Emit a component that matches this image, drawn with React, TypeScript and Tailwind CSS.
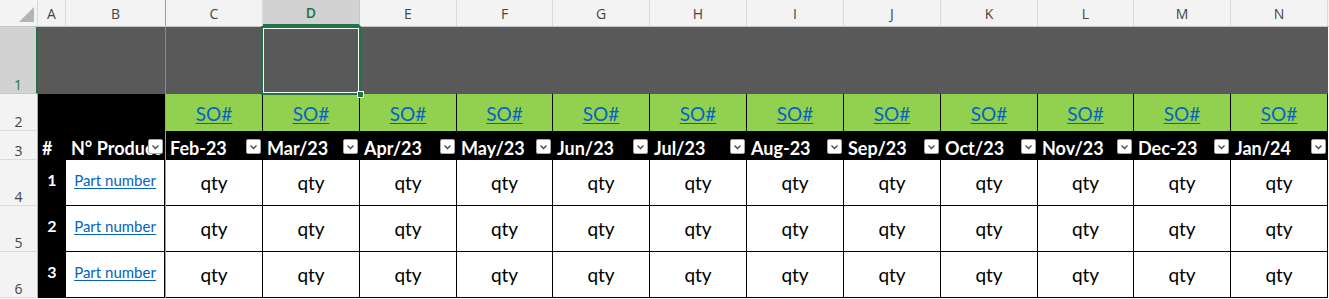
const months = [
  { letter: "C", w: "w-[97px]", label: "Feb-23" },
  { letter: "D", w: "w-[97px]", label: "Mar/23" },
  { letter: "E", w: "w-[97px]", label: "Apr/23" },
  { letter: "F", w: "w-[96px]", label: "May/23" },
  { letter: "G", w: "w-[97px]", label: "Jun/23" },
  { letter: "H", w: "w-[97px]", label: "Jul/23" },
  { letter: "I", w: "w-[97px]", label: "Aug-23" },
  { letter: "J", w: "w-[97px]", label: "Sep/23" },
  { letter: "K", w: "w-[97px]", label: "Oct/23" },
  { letter: "L", w: "w-[96px]", label: "Nov/23" },
  { letter: "M", w: "w-[97px]", label: "Dec-23" },
  { letter: "N", w: "w-[97px]", label: "Jan/24" },
];

const calibri = "font-['Lato','Liberation_Sans',sans-serif]";

// the little excel autofilter button
const FilterButton = () => (
  <div className="absolute right-[2px] bottom-[6px] w-[15px] h-[15px] bg-white border border-[#a6a6a6] rounded-[2px] flex items-center justify-center">
    <svg width="9" height="6" viewBox="0 0 9 6">
      <path d="M1.5 1.5 L4.5 4.5 L7.5 1.5" fill="none" stroke="#444" strokeWidth="1.3" />
    </svg>
  </div>
);

const RowHead = ({ n, h, active }: { n: number; h: string; active?: boolean }) => (
  <div
    className={`${h} w-[38px] shrink-0 flex items-end justify-center pb-[1px] text-[14px] leading-none font-['Open_Sans',sans-serif] border-b ${
      active
        ? "bg-[#d2d2d2] text-[#217346] border-r-2 border-r-[#217346] border-b-[#c8c8c8]"
        : "bg-[#f3f3f3] text-[#444] border-r border-r-[#ababab] border-b-[#dadada]"
    }`}
  >
    {n}
  </div>
);

const Freeze = () => <div className="w-px shrink-0 self-stretch bg-[#9b9b9b]" />;

export default function App() {
  return (
    <div className={`w-[1329px] h-[299px] bg-white overflow-hidden ${calibri}`}>
      {/* column letters */}
      <div className="flex h-[27px] bg-[#f3f3f3] border-b border-[#c6c6c6] font-['Open_Sans',sans-serif] text-[14px] text-[#444]">
        <div className="w-[38px] shrink-0 relative border-r border-[#dadada]">
          <svg className="absolute right-[3px] bottom-[4px]" width="15" height="15" viewBox="0 0 15 15">
            <path d="M15 0 L15 15 L0 15 Z" fill="#b4b4b4" />
          </svg>
        </div>
        <div className="w-[28px] shrink-0 flex items-center justify-center border-r border-[#dadada]">A</div>
        <div className="w-[99px] shrink-0 flex items-center justify-center">B</div>
        <Freeze />
        {months.map((m) => (
          <div
            key={m.letter}
            className={`${m.w} shrink-0 flex items-center justify-center border-r ${
              m.letter === "D"
                ? "bg-[#d2d2d2] text-[#217346] font-semibold border-b-2 border-b-[#217346] border-r-[#c8c8c8]"
                : "border-[#dadada]"
            }`}
          >
            {m.letter}
          </div>
        ))}
      </div>

      {/* row 1: dark band */}
      <div className="flex h-[67px]">
        <RowHead n={1} h="h-[67px]" active />
        <div className="w-[127px] shrink-0 bg-[#595959]" />
        <div className="w-px shrink-0 bg-[#8c8c8c]" />
        {months.map((m) => (
          <div key={m.letter} className={`${m.w} shrink-0 bg-[#595959] relative`}>
            {m.letter === "D" && (
              <div className="absolute -left-[2px] -top-[1px] -right-[1px] -bottom-[1px] border-2 border-[#217346] z-10">
                <div className="w-full h-full border border-white" />
                <div className="absolute -right-[5px] -bottom-[5px] w-[7px] h-[7px] bg-[#217346] border border-white" />
              </div>
            )}
          </div>
        ))}
      </div>

      {/* row 2: SO# links */}
      <div className="flex h-[37px]">
        <RowHead n={2} h="h-[37px]" />
        <div className="w-[127px] shrink-0 bg-black" />
        <Freeze />
        {months.map((m) => (
          <div
            key={m.letter}
            className={`${m.w} shrink-0 bg-[#92d050] border-r border-black flex items-center justify-center pt-[3px] text-[19px] text-[#0563c1] underline underline-offset-2`}
          >
            SO#
          </div>
        ))}
      </div>

      {/* row 3: month headers with filters */}
      <div className="flex h-[29px]">
        <RowHead n={3} h="h-[29px]" />
        <div className="w-[28px] shrink-0 bg-black text-white font-bold text-[18px] flex items-end pl-[4px] pb-[3px] leading-none">
          #
        </div>
        <div className="w-[99px] shrink-0 bg-black text-white font-bold text-[18px] relative overflow-hidden whitespace-nowrap flex items-end pl-[5px] pb-[3px] leading-none">
          N° Product
          <FilterButton />
        </div>
        <Freeze />
        {months.map((m) => (
          <div
            key={m.letter}
            className={`${m.w} shrink-0 bg-black text-white font-bold text-[18px] relative flex items-end pl-[4px] pb-[3px] leading-none whitespace-nowrap`}
          >
            {m.label}
            <FilterButton />
          </div>
        ))}
      </div>

      {/* data rows */}
      {[1, 2, 3].map((n) => (
        <div key={n} className="flex h-[46px]">
          <RowHead n={n + 3} h="h-[46px]" />
          <div className="w-[28px] shrink-0 bg-black text-white font-bold text-[16px] flex items-center justify-center pb-[7px]">
            {n}
          </div>
          <div className="w-[99px] shrink-0 border-r border-b border-black flex items-center justify-center pb-[5px] text-[15px] text-[#0563c1] underline underline-offset-2 whitespace-nowrap">
            Part number
          </div>
          <Freeze />
          {months.map((m) => (
            <div
              key={m.letter}
              className={`${m.w} shrink-0 border-r border-b border-black flex items-center justify-center pt-[1px] text-[19px] text-black`}
            >
              qty
            </div>
          ))}
        </div>
      ))}
    </div>
  );
}
